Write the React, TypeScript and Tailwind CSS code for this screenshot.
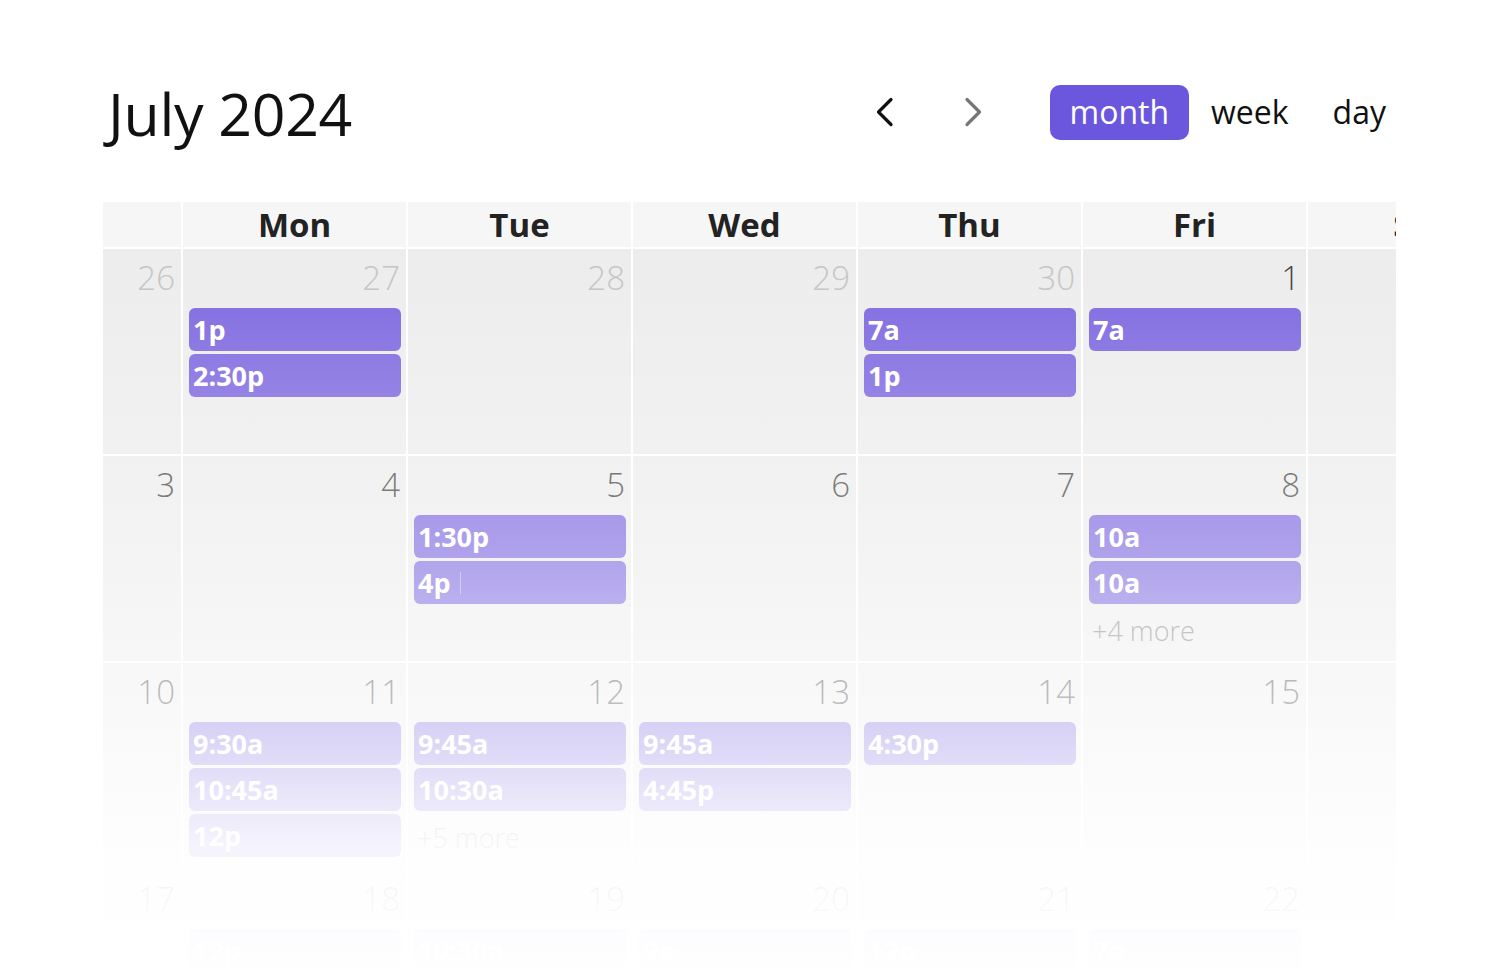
import React from 'react';

type DayCell = {
  day: number;
  muted?: boolean;
  events?: string[];
  more?: number;
};

const WEEKDAYS = ['Sun', 'Mon', 'Tue', 'Wed', 'Thu', 'Fri', 'Sat'];

const WEEKS: DayCell[][] = [
  [
    { day: 26, muted: true },
    { day: 27, muted: true, events: ['1p', '2:30p'] },
    { day: 28, muted: true },
    { day: 29, muted: true },
    { day: 30, muted: true, events: ['7a', '1p'] },
    { day: 1, events: ['7a'] },
    { day: 2 },
  ],
  [
    { day: 3 },
    { day: 4 },
    { day: 5, events: ['1:30p', '4p'] },
    { day: 6 },
    { day: 7 },
    { day: 8, events: ['10a', '10a'], more: 4 },
    { day: 9 },
  ],
  [
    { day: 10 },
    { day: 11, events: ['9:30a', '10:45a', '12p'] },
    { day: 12, events: ['9:45a', '10:30a'], more: 5 },
    { day: 13, events: ['9:45a', '4:45p'] },
    { day: 14, events: ['4:30p'] },
    { day: 15 },
    { day: 16 },
  ],
  [
    { day: 17 },
    { day: 18, events: ['12p'] },
    { day: 19, events: ['10:30a'] },
    { day: 20, events: ['9a'] },
    { day: 21, events: ['12p'] },
    { day: 22, events: ['7a'] },
    { day: 23 },
  ],
];

function Chevron({ dir }: { dir: 'left' | 'right' }) {
  return (
    <svg width="22" height="32" viewBox="0 0 22 32">
      <path
        d={dir === 'left' ? 'M17 3.5 L4.5 16 L17 28.5' : 'M5 3.5 L17.5 16 L5 28.5'}
        fill="none"
        stroke="currentColor"
        strokeWidth="3.2"
        strokeLinecap="round"
        strokeLinejoin="round"
      />
    </svg>
  );
}

function Cell({ cell }: { cell: DayCell }) {
  return (
    <div className="h-[205px] bg-[#ececec] flex flex-col">
      <div
        className={`h-[52px] pt-[5px] pr-[6px] text-right text-[33px] font-light leading-[48px] ${
          cell.muted ? 'text-[#c2c2c2]' : 'text-[#3c3c3c]'
        }`}
      >
        {cell.day}
      </div>
      <div className="mt-[7px] pl-[6px] pr-[5px] flex flex-col gap-[3px]">
        {(cell.events ?? []).map((ev, i) => (
          <div
            key={i}
            className="h-[43px] rounded-[6px] bg-[#7862de] text-white font-bold text-[27px] pl-[4px] flex items-center leading-none"
          >
            {ev}
            {ev === '4p' && <span className="ml-[9px] w-px h-[22px] bg-white/40" />}
          </div>
        ))}
        {cell.more ? (
          <div className="pl-[3px] pt-[10px] text-[27px] font-light text-[#7d7d7d] leading-none">
            +{cell.more} more
          </div>
        ) : null}
      </div>
    </div>
  );
}

export default function App() {
  return (
    <div className="h-[975px] overflow-hidden bg-white font-['Open_Sans',sans-serif] pt-[84px] pl-[103px]">
      <div className="w-[1302px] h-[56px] flex items-center justify-between">
        <h1 className="text-[59px] leading-none font-normal text-[#111] ml-[5px] mt-[2px] tracking-[-0.3px]">
          July 2024
        </h1>
        <div className="flex items-center">
          <button type="button" className="w-[60px] h-[56px] flex items-center justify-center text-[#111]">
            <Chevron dir="left" />
          </button>
          <button type="button" className="ml-[28px] w-[60px] h-[56px] flex items-center justify-center text-[#777]">
            <Chevron dir="right" />
          </button>
          <div className="ml-[47px] flex items-center gap-[3px] text-[32px] leading-none">
            <button type="button" className="h-[55px] px-[20px] rounded-[10px] bg-[#6b57dd] text-white">
              month
            </button>
            <button type="button" className="h-[55px] pl-[19px] pr-[22px] text-[#111]">
              week
            </button>
            <button type="button" className="h-[55px] px-[19px] text-[#111]">
              day
            </button>
          </div>
        </div>
      </div>

      <div className="relative mt-[62px] w-[1293px] h-[773px] overflow-hidden">
        <div className="ml-[-145px] w-[1573px]">
          <div className="grid grid-cols-[repeat(7,223px)] gap-[2px] mb-[2px]">
            {WEEKDAYS.map((d) => (
              <div
                key={d}
                className="h-[45px] bg-[#f6f6f6] flex items-center justify-center text-[33px] font-bold text-[#222] leading-none"
              >
                {d}
              </div>
            ))}
          </div>
          <div className="flex flex-col gap-[2px]">
            {WEEKS.map((week, wi) => (
              <div key={wi} className="grid grid-cols-[repeat(7,223px)] gap-[2px]">
                {week.map((cell, ci) => (
                  <Cell key={ci} cell={cell} />
                ))}
              </div>
            ))}
          </div>
        </div>
        <div className="pointer-events-none absolute inset-0 bg-[linear-gradient(to_bottom,rgba(255,255,255,0)_3%,rgba(255,255,255,0.13)_16.5%,rgba(255,255,255,0.39)_44%,rgba(255,255,255,0.74)_70%,rgba(255,255,255,0.92)_83%,rgba(255,255,255,0.985)_95%,#fff_100%)]" />
      </div>
    </div>
  );
}
